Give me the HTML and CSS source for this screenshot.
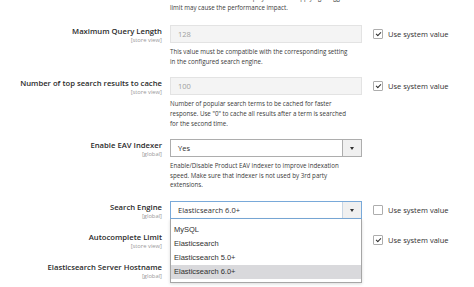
FILE: index.html
```html
<!DOCTYPE html>
<html lang="en">
<head>
    <meta charset="UTF-8">
    <title>Catalog Search</title>
    <link rel="stylesheet" href="styles.css">
</head>
<body>
    <div class="fieldset">
        <div class="row first">
            <div class="label"></div>
            <div class="control">
                <div class="note top-note">Search results number to display. Note that applying a bigger<br>limit may cause the performance impact.</div>
            </div>
            <div class="use"></div>
        </div>

        <div class="row">
            <div class="label">Maximum Query Length<span class="scope">[store view]</span></div>
            <div class="control">
                <div class="input disabled">128</div>
                <div class="note">This value must be compatible with the corresponding setting<br>in the configured search engine.</div>
            </div>
            <div class="use"><span class="checkbox checked"></span>Use system value</div>
        </div>

        <div class="row">
            <div class="label">Number of top search results to cache<span class="scope">[store view]</span></div>
            <div class="control">
                <div class="input disabled">100</div>
                <div class="note">Number of popular search terms to be cached for faster<br>response. Use "0" to cache all results after a term is searched<br>for the second time.</div>
            </div>
            <div class="use"><span class="checkbox checked"></span>Use system value</div>
        </div>

        <div class="row">
            <div class="label">Enable EAV Indexer<span class="scope">[global]</span></div>
            <div class="control">
                <div class="input select">Yes<span class="arrow"></span></div>
                <div class="note">Enable/Disable Product EAV indexer to improve indexation<br>speed. Make sure that indexer is not used by 3rd party<br>extensions.</div>
            </div>
            <div class="use"></div>
        </div>

        <div class="row">
            <div class="label">Search Engine<span class="scope">[global]</span></div>
            <div class="control dropdown-wrap">
                <div class="input select focused">Elasticsearch 6.0+<span class="arrow"></span></div>
                <ul class="options">
                    <li>MySQL</li>
                    <li>Elasticsearch</li>
                    <li>Elasticsearch 5.0+</li>
                    <li class="active">Elasticsearch 6.0+</li>
                </ul>
            </div>
            <div class="use"><span class="checkbox"></span>Use system value</div>
        </div>

        <div class="row">
            <div class="label">Autocomplete Limit<span class="scope">[store view]</span></div>
            <div class="control">
                <div class="input disabled">8</div>
            </div>
            <div class="use"><span class="checkbox checked"></span>Use system value</div>
        </div>

        <div class="row">
            <div class="label">Elasticsearch Server Hostname<span class="scope">[global]</span></div>
            <div class="control">
                <div class="input">localhost</div>
            </div>
            <div class="use"></div>
        </div>
    </div>
</body>
</html>
```

FILE: styles.css
```css
body {
    margin: 0;
    background-color: #ffffff;
    color: #303030;
    font-family: 'Open Sans', sans-serif;
    overflow: hidden;
}
.fieldset {
    margin-top: -7px;
}
.row {
    display: grid;
    grid-template-columns: 162px 192px auto;
    column-gap: 8px;
    margin-bottom: 11px;
}
.row.first {
    margin-bottom: 13px;
}
.row .use {
    margin-left: 3px;
}
.label {
    text-align: right;
    font-size: 7.7px;
    font-weight: 600;
    line-height: 9px;
    padding-top: 2px;
    color: #2b2b2b;
    white-space: nowrap;
}
.scope {
    display: block;
    font-size: 5.8px;
    font-weight: 400;
    line-height: 8px;
    color: #999999;
}
.control {
    font-size: 7.5px;
}
.input {
    box-sizing: border-box;
    height: 18px;
    border: 1px solid #adadad;
    padding: 0 7px;
    line-height: 16px;
    font-size: 7.5px;
    color: #303030;
    background-color: #ffffff;
}
.input.disabled {
    background-color: #f4f4f4;
    border-color: #e3e3e3;
    color: #a0a0a0;
}
.select {
    position: relative;
}
.select .arrow {
    position: absolute;
    top: 0;
    right: 0;
    width: 18px;
    height: 16px;
    border-left: 1px solid #adadad;
    background-color: #f0f0f0;
}
.select .arrow::after {
    content: '';
    position: absolute;
    left: 7px;
    top: 7px;
    border-left: 2px solid transparent;
    border-right: 2px solid transparent;
    border-top: 3px solid #303030;
}
.select.focused {
    border-color: #79a9d9;
}
.select.focused .arrow {
    border-left-color: #c8d6e4;
}
.note {
    margin-top: 4px;
    font-size: 6.2px;
    line-height: 9.6px;
    color: #3a3a3a;
    white-space: nowrap;
}
.top-note {
    margin-top: 0;
}
.use {
    display: flex;
    align-items: center;
    height: 18px;
    font-size: 7.5px;
    color: #303030;
}
.checkbox {
    box-sizing: border-box;
    width: 10px;
    height: 10px;
    border: 1px solid #adadad;
    border-radius: 1px;
    margin-right: 5px;
    position: relative;
    background-color: #ffffff;
}
.checkbox.checked::after {
    content: '';
    position: absolute;
    left: 2.5px;
    top: 1px;
    width: 2px;
    height: 4px;
    border-right: 1px solid #303030;
    border-bottom: 1px solid #303030;
    transform: rotate(45deg);
}
.dropdown-wrap {
    position: relative;
}
.options {
    position: absolute;
    top: 18px;
    left: 0;
    right: 0;
    margin: 0;
    padding: 4px 0 3px;
    list-style: none;
    background-color: #ffffff;
    border: 1px solid #a6a6a6;
    border-top: none;
    box-shadow: 0 1px 3px rgba(0, 0, 0, 0.15);
    font-family: 'Liberation Sans', Arial, sans-serif;
    font-size: 7.5px;
    z-index: 2;
}
.options li {
    height: 14px;
    line-height: 14px;
    padding: 0 3px;
    color: #303030;
}
.options li.active {
    background-color: #d9d9dc;
}
```
